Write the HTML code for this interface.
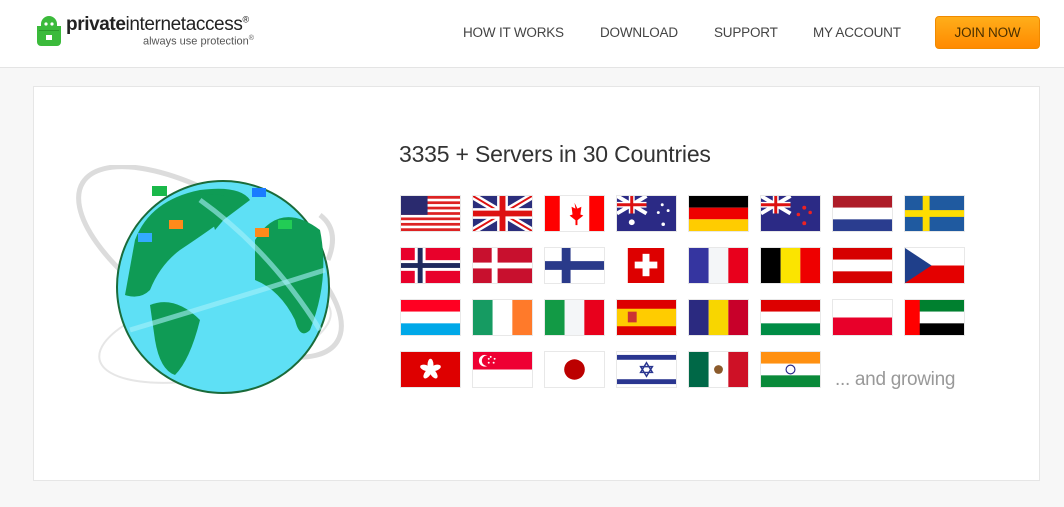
<!DOCTYPE html>
<html><head><meta charset="utf-8"><style>
*{margin:0;padding:0;box-sizing:border-box}
body{width:1064px;height:507px;background:#f7f7f7;font-family:"Liberation Sans",sans-serif;position:relative;overflow:hidden}
.hdr{position:absolute;left:0;top:0;width:1064px;height:68px;background:#fff;border-bottom:1px solid #e4e4e4}
.nav{position:absolute;top:25px;font-size:13.5px;color:#444;letter-spacing:-0.2px}
.btn{position:absolute;left:935px;top:16px;width:105px;height:33px;border-radius:4px;background:linear-gradient(#ffae1a,#ff8a00);border:1px solid #f08a00;color:#4a3000;font-size:13.5px;text-align:center;line-height:31px;letter-spacing:-0.2px}
.card{position:absolute;left:33px;top:86px;width:1007px;height:395px;background:#fff;border:1px solid #e6e6e6}
.f{position:absolute;width:61px;height:37px;border:1px solid #e8e8e8;background:#fff}
.f svg{display:block;width:59px;height:35px}
h1{position:absolute;left:399px;top:141px;font-size:23px;font-weight:normal;color:#333;letter-spacing:-0.2px}
</style></head><body>
<div class="hdr">
 <svg style="position:absolute;left:35px;top:16px" width="28" height="32" viewBox="0 0 28 32">
  <path d="M6 8a8 8 0 0 1 16 0v2h4v16a4 4 0 0 1-4 4H6a4 4 0 0 1-4-4V10h4z" fill="#3bba3b"/>
  <ellipse cx="14" cy="9" rx="7" ry="5" fill="#3bba3b"/>
  <circle cx="11" cy="8" r="1.6" fill="#fff"/><circle cx="17" cy="8" r="1.6" fill="#fff"/>
  <rect x="4" y="14" width="20" height="1" fill="#2a9a2a"/>
  <rect x="11" y="19" width="6" height="5" fill="#fff"/>
 </svg>
 <div style="position:absolute;left:66px;top:14px;font-size:19px;color:#222;letter-spacing:-0.4px"><b>private</b>internetaccess<sup style="font-size:9px">®</sup></div>
 <div style="position:absolute;left:143px;top:35px;font-size:11px;color:#555">always use protection<sup style="font-size:7px">®</sup></div>
 <div class="nav" style="left:463px">HOW IT WORKS</div>
 <div class="nav" style="left:600px">DOWNLOAD</div>
 <div class="nav" style="left:714px">SUPPORT</div>
 <div class="nav" style="left:813px">MY ACCOUNT</div>
 <div class="btn">JOIN NOW</div>
</div>
<div class="card"></div>
<svg style="position:absolute;left:60px;top:165px" width="300" height="250" viewBox="60 165 300 250">
 <ellipse cx="210" cy="262" rx="150" ry="62" transform="rotate(32 210 262)" fill="none" stroke="#dcdcdc" stroke-width="5"/>
 <ellipse cx="215" cy="335" rx="118" ry="42" transform="rotate(-12 215 335)" fill="none" stroke="#e6e6e6" stroke-width="2"/>
 <circle cx="223" cy="287" r="106" fill="#5ee0f5" stroke="#1a6b3a" stroke-width="2"/>
 <path d="M135 240 Q150 200 200 190 Q240 185 250 200 L230 215 Q210 230 180 250 Q160 265 150 290 Q140 300 125 295 Z" fill="#0f9b55"/>
 <path d="M205 195 Q230 190 232 210 L215 230 Z" fill="#0f9b55"/>
 <path d="M150 305 Q175 295 200 320 Q190 360 175 375 Q160 370 155 340 Z" fill="#0f9b55"/>
 <path d="M255 240 Q280 200 320 230 Q330 280 310 330 Q300 340 295 320 Q280 290 255 280 Z" fill="#0f9b55"/>
 <path d="M130 330 Q230 300 325 270" stroke="#a6f0fa" stroke-width="5" fill="none" opacity=".6"/>
 <path d="M200 200 Q270 250 320 330" stroke="#a6f0fa" stroke-width="5" fill="none" opacity=".6"/>
 <path d="M328 260 Q340 230 320 215" stroke="#dcdcdc" stroke-width="5" fill="none"/>
 <rect x="152" y="186" width="15" height="10" fill="#1ab84a"/><rect x="169" y="220" width="14" height="9" fill="#ff8a1a"/>
 <rect x="138" y="233" width="14" height="9" fill="#33aaff"/><rect x="252" y="188" width="14" height="9" fill="#1a7cff"/>
 <rect x="255" y="228" width="14" height="9" fill="#ff8a1a"/><rect x="278" y="220" width="14" height="9" fill="#22cc55"/>
</svg>
<h1>3335 + Servers in 30 Countries</h1>

<!-- row 1 -->
<div class="f" style="left:400px;top:195px"><svg viewBox="0 0 60 36" preserveAspectRatio="none"><rect width="60" height="36" fill="#fff"/><g fill="#d22"><rect y="0" width="60" height="2.8"/><rect y="5.5" width="60" height="2.8"/><rect y="11" width="60" height="2.8"/><rect y="16.6" width="60" height="2.8"/><rect y="22.1" width="60" height="2.8"/><rect y="27.7" width="60" height="2.8"/><rect y="33.2" width="60" height="2.8"/></g><rect width="27" height="19.4" fill="#2a2a6e"/></svg></div>
<div class="f" style="left:472px;top:195px"><svg viewBox="0 0 60 36" preserveAspectRatio="none"><rect width="60" height="36" fill="#2b2e7c"/><path d="M0 0L60 36M60 0L0 36" stroke="#fff" stroke-width="7"/><path d="M0 0L60 36M60 0L0 36" stroke="#d11" stroke-width="2"/><path d="M30 0V36M0 18H60" stroke="#fff" stroke-width="11"/><path d="M30 0V36M0 18H60" stroke="#d11" stroke-width="6"/></svg></div>
<div class="f" style="left:544px;top:195px"><svg viewBox="0 0 60 36" preserveAspectRatio="none"><rect width="60" height="36" fill="#fff"/><rect width="15" height="36" fill="#f00"/><rect x="45" width="15" height="36" fill="#f00"/><path d="M30 7l3 6 4-2-1 8 3 1-6 5v5h-2v-5l-6-5 3-1-1-8 4 2z" fill="#f00"/></svg></div>
<div class="f" style="left:616px;top:195px"><svg viewBox="0 0 60 36" preserveAspectRatio="none"><rect width="60" height="36" fill="#2b2a85"/><path d="M0 0L30 18M30 0L0 18" stroke="#fff" stroke-width="4"/><path d="M15 0V18M0 9H30" stroke="#fff" stroke-width="6"/><path d="M15 0V18M0 9H30" stroke="#d11" stroke-width="3"/><g fill="#fff"><circle cx="15" cy="27" r="3"/><circle cx="46" cy="9" r="1.5"/><circle cx="52" cy="15" r="1.5"/><circle cx="42" cy="17" r="1.5"/><circle cx="47" cy="29" r="1.8"/></g></svg></div>
<div class="f" style="left:688px;top:195px"><svg viewBox="0 0 60 36" preserveAspectRatio="none"><rect width="60" height="12" fill="#000"/><rect y="12" width="60" height="12" fill="#e00"/><rect y="24" width="60" height="12" fill="#fc0"/></svg></div>
<div class="f" style="left:760px;top:195px"><svg viewBox="0 0 60 36" preserveAspectRatio="none"><rect width="60" height="36" fill="#2b2a85"/><path d="M0 0L30 18M30 0L0 18" stroke="#fff" stroke-width="4"/><path d="M15 0V18M0 9H30" stroke="#fff" stroke-width="6"/><path d="M15 0V18M0 9H30" stroke="#d11" stroke-width="3"/><g fill="#e22"><circle cx="44" cy="12" r="2"/><circle cx="50" cy="17" r="1.8"/><circle cx="38" cy="19" r="1.8"/><circle cx="44" cy="28" r="2"/></g></svg></div>
<div class="f" style="left:832px;top:195px"><svg viewBox="0 0 60 36" preserveAspectRatio="none"><rect width="60" height="12" fill="#ae1c28"/><rect y="12" width="60" height="12" fill="#fff"/><rect y="24" width="60" height="12" fill="#2a3d8f"/></svg></div>
<div class="f" style="left:904px;top:195px"><svg viewBox="0 0 60 36" preserveAspectRatio="none"><rect width="60" height="36" fill="#1f5aa0"/><rect x="18" width="7" height="36" fill="#fd0"/><rect y="14.5" width="60" height="7" fill="#fd0"/></svg></div>
<!-- row 2 -->
<div class="f" style="left:400px;top:247px"><svg viewBox="0 0 60 36" preserveAspectRatio="none"><rect width="60" height="36" fill="#e8012b"/><rect x="14" width="11" height="36" fill="#fff"/><rect y="12.5" width="60" height="11" fill="#fff"/><rect x="17" width="5" height="36" fill="#1f2a5e"/><rect y="15.5" width="60" height="5" fill="#1f2a5e"/></svg></div>
<div class="f" style="left:472px;top:247px"><svg viewBox="0 0 60 36" preserveAspectRatio="none"><rect width="60" height="36" fill="#c8102e"/><rect x="19" width="6" height="36" fill="#fff"/><rect y="15" width="60" height="6" fill="#fff"/></svg></div>
<div class="f" style="left:544px;top:247px"><svg viewBox="0 0 60 36" preserveAspectRatio="none"><rect width="60" height="36" fill="#fff"/><rect x="17" width="9" height="36" fill="#2a3a8a"/><rect y="13.5" width="60" height="9" fill="#2a3a8a"/></svg></div>
<div class="f" style="left:616px;top:247px;border-color:#fff"><svg viewBox="0 0 60 36" preserveAspectRatio="none"><rect x="11" y="0" width="37" height="36" fill="#d00"/><rect x="26" y="6" width="7" height="23" fill="#fff"/><rect x="18" y="14" width="23" height="7" fill="#fff"/></svg></div>
<div class="f" style="left:688px;top:247px"><svg viewBox="0 0 60 36" preserveAspectRatio="none"><rect width="20" height="36" fill="#3535a0"/><rect x="20" width="20" height="36" fill="#f4f6f8"/><rect x="40" width="20" height="36" fill="#e8001c"/></svg></div>
<div class="f" style="left:760px;top:247px"><svg viewBox="0 0 60 36" preserveAspectRatio="none"><rect width="20" height="36" fill="#000"/><rect x="20" width="20" height="36" fill="#fbe400"/><rect x="40" width="20" height="36" fill="#e00"/></svg></div>
<div class="f" style="left:832px;top:247px"><svg viewBox="0 0 60 36" preserveAspectRatio="none"><rect width="60" height="12" fill="#d60000"/><rect y="12" width="60" height="12" fill="#fff"/><rect y="24" width="60" height="12" fill="#d60000"/></svg></div>
<div class="f" style="left:904px;top:247px"><svg viewBox="0 0 60 36" preserveAspectRatio="none"><rect width="60" height="18" fill="#fff"/><rect y="18" width="60" height="18" fill="#e40000"/><path d="M0 0L27 18L0 36Z" fill="#1f3f8a"/></svg></div>
<!-- row 3 -->
<div class="f" style="left:400px;top:299px"><svg viewBox="0 0 60 36" preserveAspectRatio="none"><rect width="60" height="12" fill="#f02"/><rect y="12" width="60" height="12" fill="#fff"/><rect y="24" width="60" height="12" fill="#00a8e8"/></svg></div>
<div class="f" style="left:472px;top:299px"><svg viewBox="0 0 60 36" preserveAspectRatio="none"><rect width="20" height="36" fill="#169b62"/><rect x="20" width="20" height="36" fill="#fff"/><rect x="40" width="20" height="36" fill="#ff7a2a"/></svg></div>
<div class="f" style="left:544px;top:299px"><svg viewBox="0 0 60 36" preserveAspectRatio="none"><rect width="20" height="36" fill="#129a45"/><rect x="20" width="20" height="36" fill="#f4f6f8"/><rect x="40" width="20" height="36" fill="#e8001c"/></svg></div>
<div class="f" style="left:616px;top:299px"><svg viewBox="0 0 60 36" preserveAspectRatio="none"><rect width="60" height="36" fill="#d00"/><rect y="9" width="60" height="18" fill="#fc0"/><rect x="11" y="12" width="9" height="11" fill="#c33"/></svg></div>
<div class="f" style="left:688px;top:299px"><svg viewBox="0 0 60 36" preserveAspectRatio="none"><rect width="20" height="36" fill="#2b2a80"/><rect x="20" width="20" height="36" fill="#f8d600"/><rect x="40" width="20" height="36" fill="#c8002a"/></svg></div>
<div class="f" style="left:760px;top:299px"><svg viewBox="0 0 60 36" preserveAspectRatio="none"><rect width="60" height="12" fill="#d00"/><rect y="12" width="60" height="12" fill="#fff"/><rect y="24" width="60" height="12" fill="#008c45"/></svg></div>
<div class="f" style="left:832px;top:299px"><svg viewBox="0 0 60 36" preserveAspectRatio="none"><rect width="60" height="18" fill="#fff"/><rect y="18" width="60" height="18" fill="#e8002a"/></svg></div>
<div class="f" style="left:904px;top:299px"><svg viewBox="0 0 60 36" preserveAspectRatio="none"><rect width="60" height="12" fill="#00802f"/><rect y="12" width="60" height="12" fill="#fff"/><rect y="24" width="60" height="12" fill="#000"/><rect width="15" height="36" fill="#f00"/></svg></div>
<!-- row 4 -->
<div class="f" style="left:400px;top:351px"><svg viewBox="0 0 60 36" preserveAspectRatio="none"><rect width="60" height="36" fill="#de0000"/><g fill="#fff" transform="translate(30 18)"><ellipse rx="3" ry="6" transform="translate(0 -5)"/><ellipse rx="3" ry="6" transform="rotate(72) translate(0 -5)"/><ellipse rx="3" ry="6" transform="rotate(144) translate(0 -5)"/><ellipse rx="3" ry="6" transform="rotate(216) translate(0 -5)"/><ellipse rx="3" ry="6" transform="rotate(288) translate(0 -5)"/></g></svg></div>
<div class="f" style="left:472px;top:351px"><svg viewBox="0 0 60 36" preserveAspectRatio="none"><rect width="60" height="18" fill="#ee0033"/><rect y="18" width="60" height="18" fill="#fff"/><circle cx="12" cy="9" r="6" fill="#fff"/><circle cx="14.5" cy="9" r="5.5" fill="#ee0033"/><g fill="#fff"><circle cx="18" cy="5" r="1"/><circle cx="22" cy="7" r="1"/><circle cx="21" cy="11" r="1"/><circle cx="16" cy="11" r="1"/><circle cx="16" cy="7" r="1"/></g></svg></div>
<div class="f" style="left:544px;top:351px"><svg viewBox="0 0 60 36" preserveAspectRatio="none"><rect width="60" height="36" fill="#fff"/><circle cx="30" cy="18" r="10.5" fill="#bc0000"/></svg></div>
<div class="f" style="left:616px;top:351px"><svg viewBox="0 0 60 36" preserveAspectRatio="none"><rect width="60" height="36" fill="#fff"/><rect y="3" width="60" height="5" fill="#2a3690"/><rect y="28" width="60" height="5" fill="#2a3690"/><path d="M30 11l6 10H24zM30 25l-6-10h12z" fill="none" stroke="#2a3690" stroke-width="1.5"/></svg></div>
<div class="f" style="left:688px;top:351px"><svg viewBox="0 0 60 36" preserveAspectRatio="none"><rect width="20" height="36" fill="#006847"/><rect x="20" width="20" height="36" fill="#fff"/><rect x="40" width="20" height="36" fill="#ce1126"/><circle cx="30" cy="18" r="4.5" fill="#8b5a2b"/></svg></div>
<div class="f" style="left:760px;top:351px"><svg viewBox="0 0 60 36" preserveAspectRatio="none"><rect width="60" height="12" fill="#ff9011"/><rect y="12" width="60" height="12" fill="#fff"/><rect y="24" width="60" height="12" fill="#0a8a3a"/><circle cx="30" cy="18" r="4.5" fill="none" stroke="#2a2a8a" stroke-width="1.2"/></svg></div>
<div style="position:absolute;left:835px;top:369px;font-size:19px;color:#999;letter-spacing:-0.3px">... and growing</div>
</body></html>
